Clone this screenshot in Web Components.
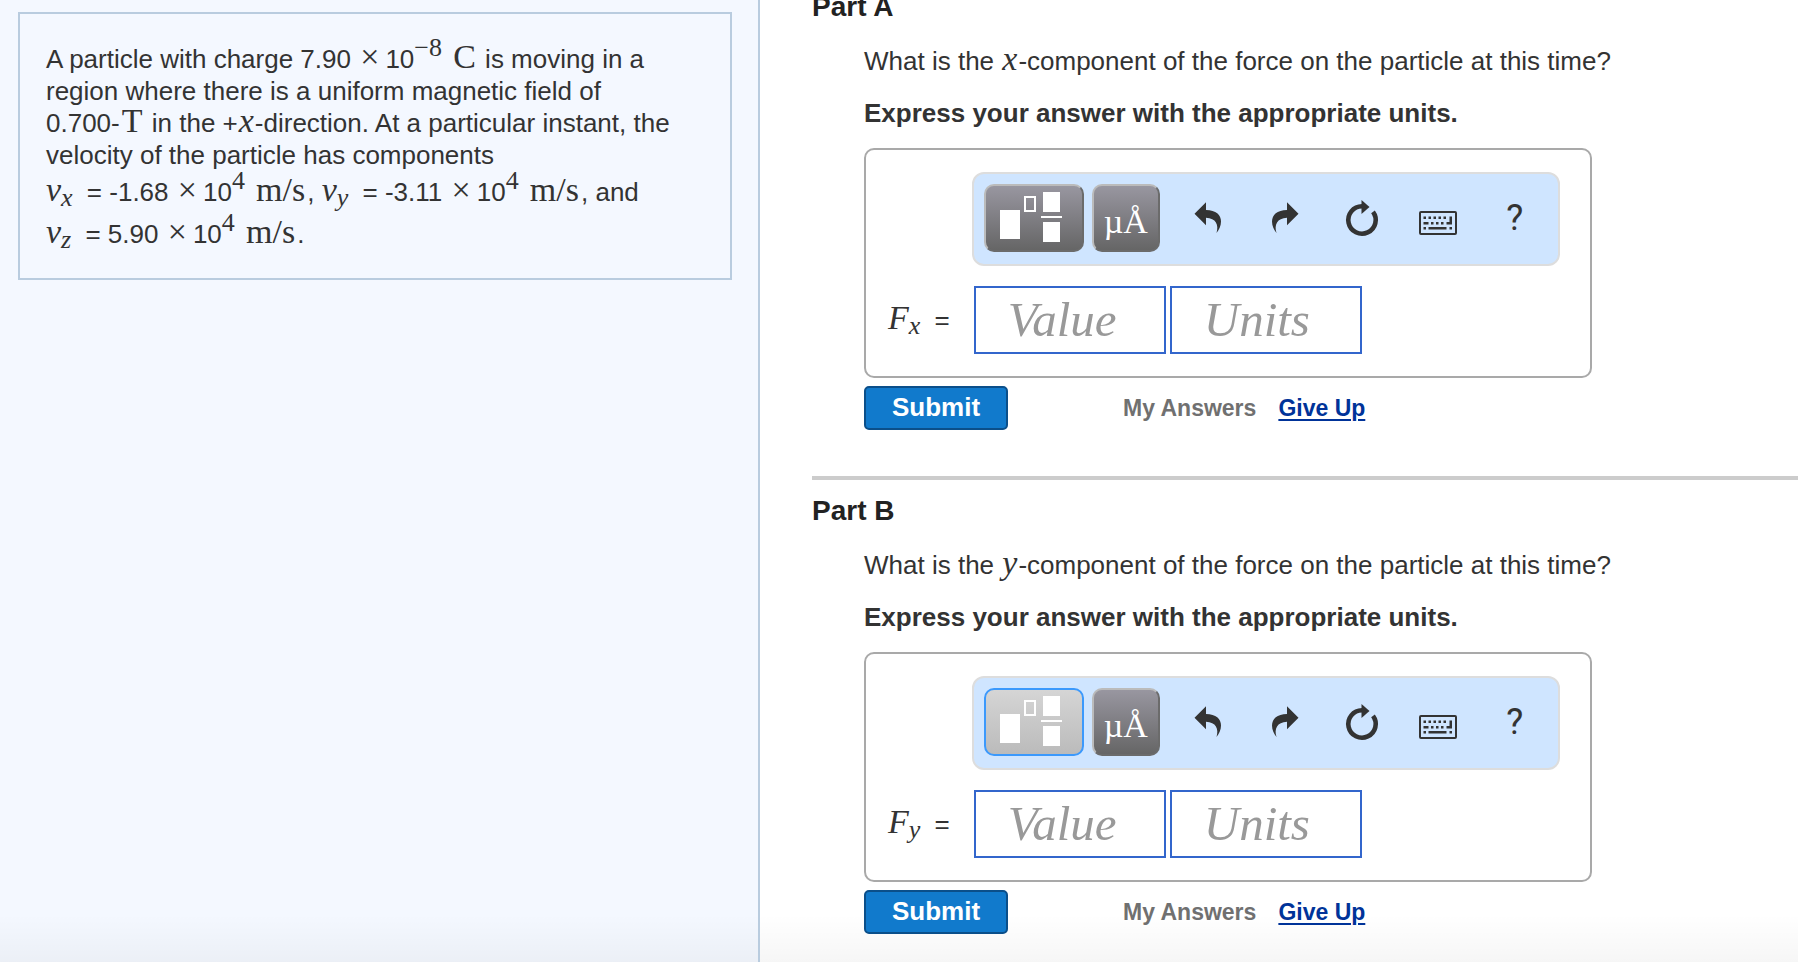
<!DOCTYPE html>
<html lang="en">
<head>
<meta charset="utf-8">
<title>Force on a moving charge</title>
<style>
  body {
    margin: 0;
    font-family: "Liberation Sans", Arial, sans-serif;
    font-size: 26px;
    line-height: 32px;
    color: #333;
  }
</style>
</head>
<body>
<assignment-page>
  <problem-statement slot="problem">
    A particle with charge 7.90 <math-times></math-times>10<math-sup>−8</math-sup> <math-term roman>C</math-term> is moving in a<br>
    region where there is a uniform magnetic field of<br>
    0.700-<math-term roman>T</math-term> in the +<math-term>x</math-term>-direction. At a particular instant, the<br>
    velocity of the particle has components
    <div slot="values">
      <math-term sub="x">v</math-term> = -1.68 <math-times></math-times>10<math-sup>4</math-sup> <math-term roman>m/s</math-term>, <math-term sub="y">v</math-term> = -3.11 <math-times></math-times>10<math-sup>4</math-sup> <math-term roman>m/s</math-term>, and
    </div>
    <div slot="values">
      <math-term sub="z">v</math-term> = 5.90 <math-times></math-times>10<math-sup>4</math-sup> <math-term roman>m/s</math-term>.
    </div>
  </problem-statement>

  <question-part heading="Part A" axis="x"></question-part>
  <question-part heading="Part B" axis="y" active></question-part>
</assignment-page>

<script>
class AssignmentPage extends HTMLElement {
  constructor() {
    super();
    this.attachShadow({ mode: "open" });
  }

  connectedCallback() {
    this.shadowRoot.innerHTML = `
      <style>
        :host {
          display: grid;
          grid-template-columns: 380fr 519fr;
          height: 100vh;
          overflow: hidden;
          --fade: linear-gradient(rgba(0, 0, 0, 0), rgba(0, 0, 0, 0.035)) bottom / 100% 48px no-repeat;
        }
        aside, main {
          min-width: 0;
          box-sizing: border-box;
          overflow: hidden;
        }
        aside {
          padding: 12px 26px 0 18px;
          border-right: 2px solid #b9ccdf;
          background: var(--fade), #f4f8ff;
        }
        main {
          padding-left: 52px;
          background: var(--fade), #fff;
        }
        /* the pane is scrolled a little past the first rule */
        ::slotted(question-part:first-of-type) {
          margin-top: -28px;
        }
      </style>
      <aside><slot name="problem"></slot></aside>
      <main><slot></slot></main>
    `;
  }
}

class ProblemStatement extends HTMLElement {
  constructor() {
    super();
    this.attachShadow({ mode: "open" });
  }

  connectedCallback() {
    this.shadowRoot.innerHTML = `
      <style>
        :host {
          display: block;
          padding: 29px 26px 23px;
          border: 2px solid #b9ccdf;
        }
        .values { line-height: 42px; }
      </style>
      <div><slot></slot></div>
      <div class="values"><slot name="values"></slot></div>
    `;
  }
}

// The inline math elements keep their templates free of outer whitespace,
// it would be rendered as a space in the running text.
class MathTerm extends HTMLElement {
  constructor() {
    super();
    this.attachShadow({ mode: "open" });
  }

  get sub() {
    return this.getAttribute("sub") || "";
  }

  connectedCallback() {
    this.shadowRoot.innerHTML = `<style>
        :host {
          display: inline;
          margin: 0 1px;
          font-family: "Liberation Serif", "Times New Roman", serif;
          font-size: 34px;
          font-style: italic;
          font-weight: 400;
          line-height: 0;
        }
        :host([roman]) {
          margin: 0 2px;
          font-style: normal;
        }
        :host([sub]) { margin: 0 7px 0 0; }
        sub {
          font-size: 26px;
          line-height: 0;
          vertical-align: -5px;
        }
      </style><slot></slot>${this.sub ? `<sub>${this.sub}</sub>` : ""}`;
  }
}

class MathSup extends HTMLElement {
  constructor() {
    super();
    this.attachShadow({ mode: "open" });
  }

  connectedCallback() {
    this.shadowRoot.innerHTML = `<style>
        :host {
          display: inline;
          margin-right: 2px;
          font-family: "Liberation Serif", "Times New Roman", serif;
          font-size: 26px;
          line-height: 0;
          vertical-align: 12px;
        }
      </style><slot></slot>`;
  }
}

class MathTimes extends HTMLElement {
  constructor() {
    super();
    this.attachShadow({ mode: "open" });
  }

  connectedCallback() {
    this.shadowRoot.innerHTML = `<style>
        :host {
          display: inline;
          margin: 0 6px 0 2px;
          font-family: "Liberation Serif", "Times New Roman", serif;
          font-size: 34px;
          line-height: 0;
        }
      </style>×`;
  }
}

class MathToolbar extends HTMLElement {
  constructor() {
    super();
    this.attachShadow({ mode: "open" });
  }

  connectedCallback() {
    this.shadowRoot.innerHTML = `
      <style>
        :host {
          display: flex;
          padding: 10px 6px 12px 10px;
          border: 2px solid #ddd;
          border-radius: 12px;
          background: #cfe5ff;
        }
        button {
          box-sizing: border-box;
          height: 68px;
          margin: 0;
          padding: 0;
          border: 0;
          background: none;
          color: #333;
        }
        svg { display: block; }
        .dark {
          width: 68px;
          margin-right: 8px;
          border: 2px solid;
          border-color: #bbb #6b6b6b #6b6b6b #bbb;
          border-radius: 10px;
          background: linear-gradient(#9a98a2, #646464) border-box;
          color: #fff;
          font: 34px/64px "Liberation Serif", "Times New Roman", serif;
        }
        .symbols { padding-top: 4px; }
        .templates { width: 100px; }
        :host([active]) .templates {
          border-color: #3b99fc;
          background: linear-gradient(#d6d6d6, #bababa) border-box;
        }
        .icons {
          display: flex;
          margin-left: 2px;
        }
        .icons button {
          display: flex;
          align-items: center;
          justify-content: center;
          width: 77px;
        }
        .icons .help {
          width: 74px;
          font: 36px/64px Roboto, sans-serif;
        }
      </style>
      <button class="dark templates" type="button" aria-label="Templates">
        <svg width="96" height="64" viewBox="0 0 96 64" fill="#fff">
          <path d="M14 24h20v29H14zM57 6h17v20H57zM55 30h21v2H55zM57 36h17v20H57z"/>
          <path d="M39 11h10v14H39z" fill="none" stroke="#fff" stroke-width="2"/>
        </svg>
      </button>
      <button class="dark symbols" type="button" aria-label="Symbols">µÅ</button>
      <div class="icons">
        <button type="button" aria-label="Undo">
          <svg width="40" height="40" viewBox="0 0 40 40" fill="currentColor">
            <path d="M6.5 15.7 18 4.3V12c10 0 15 5 15 11.5 0 4.5-2 8.5-4.5 11.5C31 27 28 20 18 19.7v7.6z"/>
          </svg>
        </button>
        <button type="button" aria-label="Redo">
          <svg width="40" height="40" viewBox="0 0 40 40" fill="currentColor">
            <path d="M33.5 15.7 22 4.3V12C12 12 7 17 7 23.5c0 4.5 2 8.5 4.5 11.5C9 27 12 20 22 19.7v7.6z"/>
          </svg>
        </button>
        <button type="button" aria-label="Reset">
          <svg width="40" height="40" viewBox="0 0 40 40">
            <path d="M20 8.3A13.7 13.7 0 1 0 31 13.8" fill="none" stroke="currentColor" stroke-width="4.6"/>
            <path d="M19.5 2 27.5 9 19.5 16z" fill="currentColor"/>
          </svg>
        </button>
        <button type="button" aria-label="Keyboard shortcuts">
          <svg width="40" height="40" viewBox="0 0 40 40" fill="currentColor">
            <rect x="1" y="14" width="36" height="22" rx="1" fill="none" stroke="currentColor" stroke-width="2"/>
            <path d="M4.5 18.5H7V21H4.5zM9.5 18.5H12V21H9.5zM14.5 18.5H17V21H14.5zM19.5 18.5H22V21H19.5zM24.5 18.5H27V21H24.5z"/>
            <path d="M4.5 24h5v2.5h-5zM12 24h2.5v2.5H12zM17 24h2.5v2.5H17zM22 24h2.5v2.5H22zM30.5 18.5H33v8h-5.5V24h3z"/>
            <path d="M4.5 29H7v2.5H4.5zM9.5 29h18v2.5h-18zM30.5 29H33v2.5h-2.5z"/>
          </svg>
        </button>
        <button class="help" type="button" aria-label="Help">?</button>
      </div>
    `;
  }
}

class QuestionPart extends HTMLElement {
  constructor() {
    super();
    this.attachShadow({ mode: "open" });
  }

  static get observedAttributes() {
    return ["heading", "axis", "active"];
  }

  attributeChangedCallback() {
    if (this.isConnected) {
      this.render();
    }
  }

  connectedCallback() {
    this.render();
  }

  get axis() {
    return this.getAttribute("axis") || "x";
  }

  render() {
    const active = this.hasAttribute("active") ? "active" : "";

    this.shadowRoot.innerHTML = `
      <style>
        :host {
          display: block;
          padding: 15px 0 46px;
          border-top: 4px solid #ccc;
        }
        h2 {
          margin: 0;
          font-size: 28px;
          line-height: 32px;
          color: #222;
        }
        .body { margin: 22px 0 0 52px; }
        p { margin: 0; }
        p + p { margin: 20px 0 19px; }
        .answer {
          display: inline-grid;
          grid-template-columns: auto auto;
          row-gap: 20px;
          align-items: center;
          vertical-align: top;
          padding: 22px 30px 22px 22px;
          border: 2px solid #a9a9a9;
          border-radius: 10px;
        }
        math-toolbar { grid-column: 2; }
        label { padding-right: 22px; }
        .fields {
          display: flex;
          gap: 4px;
          margin-left: 2px;
        }
        input {
          box-sizing: border-box;
          width: 192px;
          height: 68px;
          margin: 0;
          padding: 0 20px 2px 32px;
          border: 2px solid #36c;
          border-radius: 0;
          background: #fff;
          font: italic 49px "Liberation Serif", "Times New Roman", serif;
          color: #333;
        }
        input::placeholder { color: #999; opacity: 1; }
        .actions {
          display: flex;
          align-items: center;
          margin-top: 8px;
          font-size: 23px;
          font-weight: bold;
        }
        .submit {
          box-sizing: border-box;
          width: 144px;
          height: 44px;
          margin: 0 115px 0 0;
          padding: 0 0 2px;
          border: 2px solid #0b4f8a;
          border-radius: 5px;
          background: #117acc;
          color: #fff;
          font: bold 26px "Liberation Sans", Arial, sans-serif;
        }
        a { color: #039; text-underline-offset: 3px; }
        .mine {
          margin-right: 22px;
          color: #707070;
          text-decoration: none;
        }
      </style>
      <h2>${this.getAttribute("heading")}</h2>
      <form class="body">
        <p>What is the <math-term>${this.axis}</math-term>-component of the force on the particle at this time?</p>
        <p><b>Express your answer with the appropriate units.</b></p>
        <div class="answer">
          <math-toolbar ${active}></math-toolbar>
          <label for="value"><math-term sub="${this.axis}">F</math-term> =</label>
          <div class="fields">
            <input id="value" type="text" placeholder="Value">
            <input type="text" placeholder="Units" aria-label="Units">
          </div>
        </div>
        <div class="actions">
          <button class="submit" type="button">Submit</button>
          <a class="mine" href="#answers">My Answers</a>
          <a href="#give-up">Give Up</a>
        </div>
      </form>
    `;
  }
}

customElements.define("math-term", MathTerm);
customElements.define("math-sup", MathSup);
customElements.define("math-times", MathTimes);
customElements.define("math-toolbar", MathToolbar);
customElements.define("question-part", QuestionPart);
customElements.define("problem-statement", ProblemStatement);
customElements.define("assignment-page", AssignmentPage);
</script>
</body>
</html>
